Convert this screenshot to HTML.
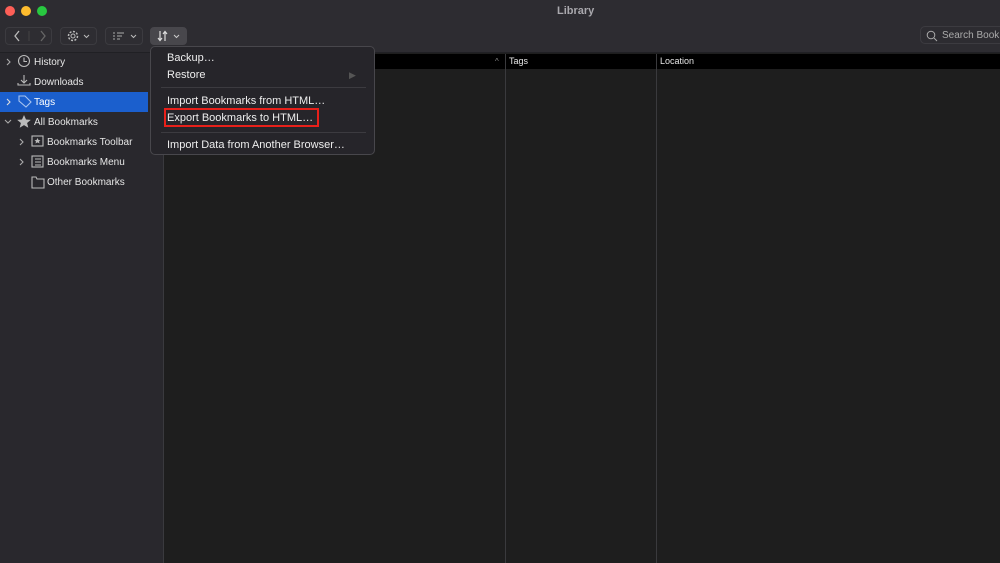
<html><head><style>
body{margin:0;width:1000px;height:563px;overflow:hidden;background:#1e1e1e;font-family:"Liberation Sans",sans-serif;position:relative}
.a{position:absolute}
.t{color:#e6e6e6;font-size:10px}
.btn{position:absolute;top:27px;height:16px;border:1px solid #3c3b40;border-radius:4px;background:#2e2d32}
.mi{position:absolute;left:16px;font-size:11px;color:#eee}
svg{position:absolute;overflow:visible}
</style></head><body>
<div class="a" style="left:0;top:0;width:1000px;height:52px;background:#2d2c31;border-bottom:1px solid #202024"></div>
<div class="a" style="left:5px;top:6px;width:10px;height:10px;border-radius:50%;background:#fe5f57"></div>
<div class="a" style="left:21px;top:6px;width:10px;height:10px;border-radius:50%;background:#febc2e"></div>
<div class="a" style="left:37px;top:6px;width:10px;height:10px;border-radius:50%;background:#28c840"></div>
<div class="a" style="left:557px;top:5px;font-size:11px;font-weight:bold;color:#a9a8ad">Library</div>
<div class="btn" style="left:5px;width:45px">
<svg style="left:0;top:0" width="45" height="16"><path d="M13 3 L9 8 L13 13" stroke="#bbb" stroke-width="1.3" fill="none"/><path d="M23 3 L23 13" stroke="#444"/><path d="M35 3 L39 8 L35 13" stroke="#666" stroke-width="1.3" fill="none"/></svg></div>
<div class="btn" style="left:60px;width:35px">
<svg style="left:0;top:0" width="35" height="16"><circle cx="12" cy="8" r="4.5" stroke="#bbb" stroke-width="1.5" stroke-dasharray="2 1.5" fill="none"/><circle cx="12" cy="8" r="2" stroke="#bbb" fill="none"/><path d="M23 7 L25.5 9.5 L28 7" stroke="#bbb" fill="none"/></svg></div>
<div class="btn" style="left:105px;width:36px">
<svg style="left:0;top:0" width="36" height="16"><path d="M7 5h2M7 8h2M7 11h2M11 5h7M11 8h5M11 11h3" stroke="#aaa"/><path d="M25 7 L27.5 9.5 L30 7" stroke="#bbb" fill="none"/></svg></div>
<div class="btn" style="left:150px;width:35px;background:#48474c;border-color:#48474c">
<svg style="left:0;top:0" width="35" height="16"><path d="M9 3v9M7 10l2 2.5 2-2.5M14 13V4M12 6l2-2.5 2 2.5" stroke="#ddd" stroke-width="1.2" fill="none"/><path d="M23 7 L25.5 9.5 L28 7" stroke="#ccc" fill="none"/></svg></div>
<div class="a" style="left:920px;top:26px;width:90px;height:18px;border:1px solid #3c3b40;border-radius:5px;color:#aaa;font-size:10px;line-height:18px;padding-left:21px;box-sizing:border-box">Search Book</div>
<svg style="left:926px;top:30px" width="12" height="12"><circle cx="5" cy="5" r="3.8" stroke="#aaa" fill="none"/><path d="M8 8l3 3" stroke="#aaa"/></svg>
<div class="a" style="left:0;top:53px;width:163px;height:510px;background:#29282d;border-right:1px solid #3a3a3e"></div>
<div class="a" style="left:0;top:92px;width:148px;height:20px;background:#1b5fcd"></div>
<svg style="left:0;top:52px" width="160" height="140">
<g stroke="#aaa" fill="none" stroke-width="1.1">
<path d="M7 7l3 3-3 3"/><path d="M7 47l3 3-3 3" stroke="#ddd"/><path d="M5 68l3 3 3-3"/><path d="M20 87l3 3-3 3"/><path d="M20 107l3 3-3 3"/>
</g>
<g stroke="#bbb" fill="none" stroke-width="1.1">
<circle cx="24" cy="9" r="5.5"/><path d="M24 5.5v4h3"/>
<path d="M24 23v8M21 28l3 3 3-3M18 31v2h12v-2"/>
<path d="M19 44h6l6 6-5 5-7-6z" stroke="#a8c4f0"/>
<rect x="32" y="84" width="11" height="10"/><rect x="32" y="104" width="11" height="11"/><path d="M35 107h6M35 110h6M35 113h6"/>
<path d="M32 125h4l1 2h7v9H32z"/>
</g>
<path d="M24 63l2 4.5 4.8.4-3.7 3.1 1.2 4.7-4.3-2.6-4.3 2.6 1.2-4.7-3.7-3.1 4.8-.4z" fill="#bbb"/>
<path d="M37.5 86l1 2 2 .2-1.5 1.3.5 2-2-1.1-2 1.1.5-2-1.5-1.3 2-.2z" fill="#bbb"/>
</svg>
<div class="a t" style="left:34px;top:57px">History</div>
<div class="a t" style="left:34px;top:77px">Downloads</div>
<div class="a t" style="left:34px;top:97px;color:#fff">Tags</div>
<div class="a t" style="left:34px;top:117px">All Bookmarks</div>
<div class="a t" style="left:47px;top:137px">Bookmarks Toolbar</div>
<div class="a t" style="left:47px;top:157px">Bookmarks Menu</div>
<div class="a t" style="left:47px;top:177px">Other Bookmarks</div>
<div class="a" style="left:164px;top:54px;width:836px;height:15px;background:#000"></div>
<div class="a t" style="left:509px;top:56px;font-size:9px">Tags</div>
<div class="a t" style="left:660px;top:56px;font-size:9px">Location</div>
<div class="a t" style="left:495px;top:57px;font-size:8px;color:#888">^</div>
<div class="a" style="left:505px;top:54px;width:1px;height:509px;background:#3a3a3d"></div>
<div class="a" style="left:656px;top:54px;width:1px;height:509px;background:#3a3a3d"></div>
<div class="a" style="left:150px;top:46px;width:225px;height:109px;background:#26252a;border:1px solid #48474c;border-radius:5px;box-sizing:border-box">
<div class="mi" style="top:5px">Backup…</div>
<div class="mi" style="top:22px">Restore</div><div class="a" style="left:198px;top:23px;color:#555;font-size:9px">▶</div>
<div class="a" style="left:10px;top:40px;width:205px;height:1px;background:#3c3b40"></div>
<div class="mi" style="top:48px">Import Bookmarks from HTML…</div>
<div class="mi" style="top:65px">Export Bookmarks to HTML…</div>
<div class="a" style="left:13px;top:61px;width:155px;height:19px;border:2px solid #e8201a;box-sizing:border-box"></div>
<div class="a" style="left:10px;top:85px;width:205px;height:1px;background:#3c3b40"></div>
<div class="mi" style="top:92px">Import Data from Another Browser…</div>
</div>
</body></html>
